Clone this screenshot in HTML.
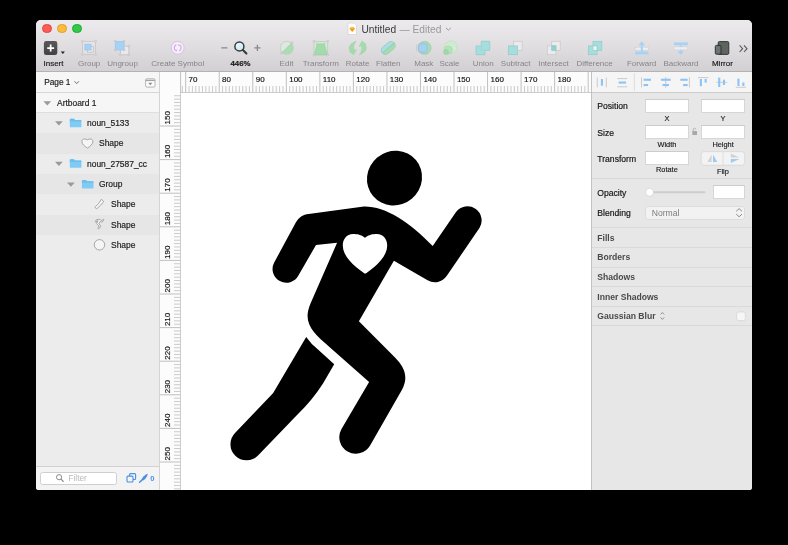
<!DOCTYPE html>
<html>
<head>
<meta charset="utf-8">
<title>Sketch</title>
<style>
*{box-sizing:border-box;margin:0;padding:0}
html,body{width:788px;height:545px;background:#000;overflow:hidden}
body{font-family:"Liberation Sans",sans-serif;position:relative;color:#222}
.abs{position:absolute}
#win{position:absolute;left:36px;top:20px;width:716px;height:469.6px;border-radius:5px 5px 3px 3px;overflow:hidden;background:#fff;will-change:transform}
#chrome{position:absolute;left:0;top:0;width:716px;height:52px;background:linear-gradient(#eceaec 0,#e4e2e4 18px,#d2d0d2 51px);border-bottom:1px solid #b4b2b4}
.tl{position:absolute;top:3.8px;width:9.6px;height:9.6px;border-radius:50%}
.lbl{position:absolute;top:38.5px;font-size:8px;line-height:10px;color:#878587;white-space:nowrap;transform:translateX(-50%)}
.lbl.on{color:#1c1c1c;-webkit-text-stroke:0.18px #1c1c1c}
#title{position:absolute;top:3.6px;left:0;height:12px;font-size:10.2px;line-height:12px;white-space:nowrap}
/* sidebar */
#side{position:absolute;left:0;top:52px;width:124px;height:418px;background:#ececec;border-right:1px solid #d4d4d4}
.row{position:absolute;left:0;width:123px;height:20.3px;font-size:8.45px;line-height:20.3px;color:#1e1e1e;white-space:nowrap;-webkit-text-stroke:0.18px #1e1e1e}
.row span{position:absolute;top:0}
/* inspector */
#insp{position:absolute;left:555.7px;top:52px;width:161px;height:418px;background:#e7e7e7;box-shadow:-1px 0 0 #c2c2c2}
.ilab{position:absolute;font-size:8.6px;line-height:10px;color:#151515;white-space:nowrap;-webkit-text-stroke:0.18px #151515}
.isub{position:absolute;font-size:7.4px;line-height:8px;color:#1a1a1a;white-space:nowrap;transform:translateX(-50%);-webkit-text-stroke:0.15px #1a1a1a}
.inp{position:absolute;background:#fff;border:0.8px solid #d6d6d6;border-top-color:#cccccc;height:13.7px}
.sep{position:absolute;left:0;width:161px;height:1px;background:#dadada}
.sect{position:absolute;left:5.6px;font-size:8.6px;line-height:10px;font-weight:bold;color:#4a4a4a;white-space:nowrap}
</style>
</head>
<body>
<div id="win">
  <!-- canvas -->
  <div class="abs" id="canvas" style="left:144.5px;top:72px;width:411px;height:397px;background:#fff"></div>
  <svg class="abs" style="left:144px;top:72px" width="412" height="397" viewBox="180 92 412 397">
    <g fill="#000">
      <ellipse cx="394.5" cy="178.1" rx="28" ry="26.9" transform="rotate(-40 394.5 178.1)"/>
      <path d="M363.9,206.4 C385,206 409.5,221.5 432.7,246 L456.2,211.8 A14.2,14.2 0 0 1 479.6,227.8 L446.6,276.1 A14.2,14.2 0 0 1 427.6,280.3 L393.9,260.7 L358.9,321.2 L395,357.6 C404.5,367.5 409,377 401.7,390.3 L370.1,445.4 A16.5,16.5 0 0 1 341.5,428.9 L369.1,382 L330,347.6 C313,332.5 302,323.5 310.5,303.5 L337.1,242.7 L316,245.1 L298.4,275.5 A13.7,13.7 0 0 1 274.2,262.5 L295.8,222.5 C299.5,216.5 303,214.6 308.6,213.9 Z"/>
      <path d="M306.2,337 Q311,344 318,349.6 L334.2,364.2 L323,383.5 Q312,400.5 298,414 L258,455.5 A16,16 0 0 1 235,433.1 L273.2,392.9 Z"/>
    </g>
    <path fill="#fff" d="M365,237.8 C361,234.5 357.5,234 353,234 C346.5,234 342.8,239.3 342.8,245.5 C342.8,256.3 353.5,265.5 364.2,273.2 Q365.2,273.9 366.2,273.2 C376.9,265.5 387.2,256.3 387.2,245.5 C387.2,239.3 383.5,234 376.8,234 C372.5,234 369,234.5 365,237.8 Z"/>
  </svg>

  <!-- title + toolbar -->
  <div id="chrome">
    <div class="tl" style="left:6.1px;background:#fc5b57;border:0.5px solid #e2463f"></div>
    <div class="tl" style="left:21.2px;background:#fdbc40;border:0.5px solid #dfa023"></div>
    <div class="tl" style="left:36.3px;background:#34c84a;border:0.5px solid #1dad2b"></div>
    <div id="title"><span class="abs" style="left:325.5px;color:#3a3a3a">Untitled</span><span class="abs" style="left:363.5px;color:#9a989a">— Edited</span></div>
    <div class="lbl on" style="left:17.5px">Insert</div>
    <div class="lbl" style="left:53.2px">Group</div>
    <div class="lbl" style="left:86.5px">Ungroup</div>
    <div class="lbl" style="left:141.8px">Create Symbol</div>
    <div class="lbl on" style="left:204.5px;font-weight:bold;font-size:7.8px">446%</div>
    <div class="lbl" style="left:250.5px">Edit</div>
    <div class="lbl" style="left:284.8px">Transform</div>
    <div class="lbl" style="left:321.6px">Rotate</div>
    <div class="lbl" style="left:352.3px">Flatten</div>
    <div class="lbl" style="left:387.8px">Mask</div>
    <div class="lbl" style="left:413.4px">Scale</div>
    <div class="lbl" style="left:447.2px">Union</div>
    <div class="lbl" style="left:479.7px">Subtract</div>
    <div class="lbl" style="left:517.5px">Intersect</div>
    <div class="lbl" style="left:558.6px">Difference</div>
    <div class="lbl" style="left:605.6px">Forward</div>
    <div class="lbl" style="left:645px">Backward</div>
    <div class="lbl on" style="left:686.4px">Mirror</div>
  </div>

  <!-- sidebar -->
  <div id="side">
    <div class="abs" style="left:0;top:0;width:123px;height:20.85px;background:#f6f6f6;border-bottom:1px solid #d6d6d6"></div>
    <div class="row" style="top:0;height:20px;line-height:20px"><span style="left:8.2px;font-size:8.3px">Page 1</span></div>
    <div class="row" style="top:20.85px;background:#f6f6f6;border-bottom:1px solid #dedede"><span style="left:21px">Artboard 1</span></div>
    <div class="row" style="top:41.15px;background:#ececec"><span style="left:51px">noun_5133</span></div>
    <div class="row" style="top:61.45px;background:#e6e6e6"><span style="left:63px">Shape</span></div>
    <div class="row" style="top:81.75px;background:#ececec"><span style="left:51px">noun_27587_cc</span></div>
    <div class="row" style="top:102.05px;background:#e6e6e6"><span style="left:63px">Group</span></div>
    <div class="row" style="top:122.35px;background:#ececec"><span style="left:75px">Shape</span></div>
    <div class="row" style="top:142.65px;background:#e6e6e6"><span style="left:75px">Shape</span></div>
    <div class="row" style="top:162.95px;background:#ececec"><span style="left:75px">Shape</span></div>
    <div class="abs" style="left:0;top:394.2px;width:123px;height:24px;background:#f3f3f3;border-top:1px solid #d2d2d2"></div>
    <div class="abs" style="left:4px;top:399.5px;width:76.5px;height:13.4px;background:#fff;border:0.7px solid #cfcfcf;border-radius:2.5px"></div>
    <div class="abs" style="left:32.4px;top:400.8px;font-size:8.3px;line-height:11px;color:#b8b8b8">Filter</div>
    <div class="abs" style="left:114.3px;top:401px;font-size:7.6px;line-height:11px;font-weight:bold;color:#4a90e2">0</div>
  </div>

  <!-- rulers -->
  <div class="abs" id="hruler" style="left:124px;top:52px;width:432px;height:20.6px;background:#fcfcfc;border-bottom:1px solid #cfcfcf"></div>
  <div class="abs" id="vruler" style="left:124px;top:72px;width:20.6px;height:398px;background:#fcfcfc;border-right:1px solid #cfcfcf"></div>

  <svg class="abs" style="left:124px;top:52px" width="432" height="21" viewBox="0 0 432 21"><path d="M20.6,0V20.6M25.70,0V20.6M59.24,0V20.6M92.78,0V20.6M126.32,0V20.6M159.86,0V20.6M193.40,0V20.6M226.94,0V20.6M260.48,0V20.6M294.02,0V20.6M327.56,0V20.6M361.10,0V20.6M394.64,0V20.6M428.18,0V20.6" stroke="#b9b9b9" stroke-width="0.9" fill="none"/><path d="M22.35,14V20.6M29.05,14V20.6M32.41,14V20.6M35.76,14V20.6M39.12,14V20.6M42.47,14V20.6M45.82,14V20.6M49.18,14V20.6M52.53,14V20.6M55.89,14V20.6M62.59,14V20.6M65.95,14V20.6M69.30,14V20.6M72.66,14V20.6M76.01,14V20.6M79.36,14V20.6M82.72,14V20.6M86.07,14V20.6M89.43,14V20.6M96.13,14V20.6M99.49,14V20.6M102.84,14V20.6M106.20,14V20.6M109.55,14V20.6M112.90,14V20.6M116.26,14V20.6M119.61,14V20.6M122.97,14V20.6M129.67,14V20.6M133.03,14V20.6M136.38,14V20.6M139.74,14V20.6M143.09,14V20.6M146.44,14V20.6M149.80,14V20.6M153.15,14V20.6M156.51,14V20.6M163.21,14V20.6M166.57,14V20.6M169.92,14V20.6M173.28,14V20.6M176.63,14V20.6M179.98,14V20.6M183.34,14V20.6M186.69,14V20.6M190.05,14V20.6M196.75,14V20.6M200.11,14V20.6M203.46,14V20.6M206.82,14V20.6M210.17,14V20.6M213.52,14V20.6M216.88,14V20.6M220.23,14V20.6M223.59,14V20.6M230.29,14V20.6M233.65,14V20.6M237.00,14V20.6M240.36,14V20.6M243.71,14V20.6M247.06,14V20.6M250.42,14V20.6M253.77,14V20.6M257.13,14V20.6M263.83,14V20.6M267.19,14V20.6M270.54,14V20.6M273.90,14V20.6M277.25,14V20.6M280.60,14V20.6M283.96,14V20.6M287.31,14V20.6M290.67,14V20.6M297.37,14V20.6M300.73,14V20.6M304.08,14V20.6M307.44,14V20.6M310.79,14V20.6M314.14,14V20.6M317.50,14V20.6M320.85,14V20.6M324.21,14V20.6M330.91,14V20.6M334.27,14V20.6M337.62,14V20.6M340.98,14V20.6M344.33,14V20.6M347.68,14V20.6M351.04,14V20.6M354.39,14V20.6M357.75,14V20.6M364.45,14V20.6M367.81,14V20.6M371.16,14V20.6M374.52,14V20.6M377.87,14V20.6M381.22,14V20.6M384.58,14V20.6M387.93,14V20.6M391.29,14V20.6M397.99,14V20.6M401.35,14V20.6M404.70,14V20.6M408.06,14V20.6M411.41,14V20.6M414.76,14V20.6M418.12,14V20.6M421.47,14V20.6M424.83,14V20.6" stroke="#bebebe" stroke-width="0.8" fill="none"/><g font-family="Liberation Sans, sans-serif" font-size="8" fill="#111" stroke="#111" stroke-width=".15"><text x="28.6" y="10.3">70</text><text x="62.1" y="10.3">80</text><text x="95.7" y="10.3">90</text><text x="129.2" y="10.3">100</text><text x="162.8" y="10.3">110</text><text x="196.3" y="10.3">120</text><text x="229.8" y="10.3">130</text><text x="263.4" y="10.3">140</text><text x="296.9" y="10.3">150</text><text x="330.5" y="10.3">160</text><text x="364.0" y="10.3">170</text><text x="397.5" y="10.3">180</text><text x="431.1" y="10.3">190</text></g></svg>
  <svg class="abs" style="left:124px;top:72px" width="21" height="398" viewBox="0 0 21 398"><path d="M0,34.00H20.5M0,67.60H20.5M0,101.20H20.5M0,134.80H20.5M0,168.40H20.5M0,202.00H20.5M0,235.60H20.5M0,269.20H20.5M0,302.80H20.5M0,336.40H20.5M0,370.00H20.5" stroke="#b9b9b9" stroke-width="0.9" fill="none"/><path d="M14,3.76H20.5M14,7.12H20.5M14,10.48H20.5M14,13.84H20.5M14,17.20H20.5M14,20.56H20.5M14,23.92H20.5M14,27.28H20.5M14,30.64H20.5M14,37.36H20.5M14,40.72H20.5M14,44.08H20.5M14,47.44H20.5M14,50.80H20.5M14,54.16H20.5M14,57.52H20.5M14,60.88H20.5M14,64.24H20.5M14,70.96H20.5M14,74.32H20.5M14,77.68H20.5M14,81.04H20.5M14,84.40H20.5M14,87.76H20.5M14,91.12H20.5M14,94.48H20.5M14,97.84H20.5M14,104.56H20.5M14,107.92H20.5M14,111.28H20.5M14,114.64H20.5M14,118.00H20.5M14,121.36H20.5M14,124.72H20.5M14,128.08H20.5M14,131.44H20.5M14,138.16H20.5M14,141.52H20.5M14,144.88H20.5M14,148.24H20.5M14,151.60H20.5M14,154.96H20.5M14,158.32H20.5M14,161.68H20.5M14,165.04H20.5M14,171.76H20.5M14,175.12H20.5M14,178.48H20.5M14,181.84H20.5M14,185.20H20.5M14,188.56H20.5M14,191.92H20.5M14,195.28H20.5M14,198.64H20.5M14,205.36H20.5M14,208.72H20.5M14,212.08H20.5M14,215.44H20.5M14,218.80H20.5M14,222.16H20.5M14,225.52H20.5M14,228.88H20.5M14,232.24H20.5M14,238.96H20.5M14,242.32H20.5M14,245.68H20.5M14,249.04H20.5M14,252.40H20.5M14,255.76H20.5M14,259.12H20.5M14,262.48H20.5M14,265.84H20.5M14,272.56H20.5M14,275.92H20.5M14,279.28H20.5M14,282.64H20.5M14,286.00H20.5M14,289.36H20.5M14,292.72H20.5M14,296.08H20.5M14,299.44H20.5M14,306.16H20.5M14,309.52H20.5M14,312.88H20.5M14,316.24H20.5M14,319.60H20.5M14,322.96H20.5M14,326.32H20.5M14,329.68H20.5M14,333.04H20.5M14,339.76H20.5M14,343.12H20.5M14,346.48H20.5M14,349.84H20.5M14,353.20H20.5M14,356.56H20.5M14,359.92H20.5M14,363.28H20.5M14,366.64H20.5M14,373.36H20.5M14,376.72H20.5M14,380.08H20.5M14,383.44H20.5M14,386.80H20.5M14,390.16H20.5M14,393.52H20.5M14,396.88H20.5" stroke="#bebebe" stroke-width="0.8" fill="none"/><g font-family="Liberation Sans, sans-serif" font-size="8" fill="#111" stroke="#111" stroke-width=".15"><text transform="translate(9.7,32.5) rotate(-90)">150</text><text transform="translate(9.7,66.1) rotate(-90)">160</text><text transform="translate(9.7,99.7) rotate(-90)">170</text><text transform="translate(9.7,133.3) rotate(-90)">180</text><text transform="translate(9.7,166.9) rotate(-90)">190</text><text transform="translate(9.7,200.5) rotate(-90)">200</text><text transform="translate(9.7,234.1) rotate(-90)">210</text><text transform="translate(9.7,267.7) rotate(-90)">220</text><text transform="translate(9.7,301.3) rotate(-90)">230</text><text transform="translate(9.7,334.9) rotate(-90)">240</text><text transform="translate(9.7,368.5) rotate(-90)">250</text></g></svg>
  <!-- inspector -->
  <div id="insp">
    <div class="abs" style="left:0;top:0;width:161px;height:20.6px;background:#f5f5f5;border-bottom:1px solid #cdcdcd"></div>
    <div class="ilab" style="left:5.6px;top:29px">Position</div>
    <div class="ilab" style="left:5.6px;top:55.5px">Size</div>
    <div class="ilab" style="left:5.6px;top:82px">Transform</div>
    <div class="inp" style="left:53.5px;top:27px;width:43.5px"></div>
    <div class="inp" style="left:109.5px;top:27px;width:43.6px"></div>
    <div class="inp" style="left:53.5px;top:53.4px;width:43.5px"></div>
    <div class="inp" style="left:109.5px;top:53.4px;width:43.6px"></div>
    <div class="inp" style="left:53.5px;top:79.3px;width:43.5px"></div>
    <div class="isub" style="left:75.2px;top:42.8px">X</div>
    <div class="isub" style="left:131.4px;top:42.8px">Y</div>
    <div class="isub" style="left:75.2px;top:69.1px">Width</div>
    <div class="isub" style="left:131.4px;top:69.1px">Height</div>
    <div class="isub" style="left:75.2px;top:94.4px">Rotate</div>
    <div class="isub" style="left:131.2px;top:95.9px">Flip</div>
    <div class="sep" style="top:106.4px"></div>
    <div class="ilab" style="left:5.6px;top:115.5px">Opacity</div>
    <div class="ilab" style="left:5.6px;top:135.8px">Blending</div>
    <div class="inp" style="left:121.6px;top:113.2px;width:31.7px;height:13.5px"></div>
    <div class="abs" style="left:53.8px;top:133.5px;width:99.5px;height:14.5px;background:#f2f2f2;border:0.8px solid #dcdcdc;border-radius:3px"></div>
    <div class="abs" style="left:60px;top:135.8px;font-size:8.6px;line-height:10px;color:#7c7c7c">Normal</div>
    <div class="sep" style="top:155px"></div>
    <div class="sect" style="top:160.8px">Fills</div>
    <div class="sep" style="top:174.8px"></div>
    <div class="sect" style="top:180.3px">Borders</div>
    <div class="sep" style="top:194.5px"></div>
    <div class="sect" style="top:199.9px">Shadows</div>
    <div class="sep" style="top:214.1px"></div>
    <div class="sect" style="top:219.5px">Inner Shadows</div>
    <div class="sep" style="top:233.6px"></div>
    <div class="sect" style="top:238.9px">Gaussian Blur</div>
    <div class="sep" style="top:253px"></div>
  </div>
</div>
<svg class="abs" id="icons" style="left:0;top:0" width="788" height="545" viewBox="0 0 788 545">
<defs><linearGradient id="gi" x1="0" y1="0" x2="0" y2="1"><stop offset="0" stop-color="#585858"/><stop offset="1" stop-color="#434343"/></linearGradient>
<linearGradient id="gm" x1="0" y1="0" x2="1" y2="1"><stop offset="0" stop-color="#f4fbff"/><stop offset="1" stop-color="#c4e4f6"/></linearGradient></defs>
<!-- title -->
<path d="M348,23.1 h6.3 l2.1,2.1 v9.3 h-8.4 Z" fill="#fff" stroke="#c4c2c4" stroke-width=".5"/>
<path d="M349.5,28.7 l1.5,-1.7 h2.5 l1.5,1.7 l-2.75,3.2 Z" fill="#f39c12"/><path d="M349.5,28.7 l1.5,-1.7 h2.5 l1.5,1.7 Z" fill="#fdc02f"/>
<path d="M446,27.9 l2.4,2.3 l2.4,-2.3" fill="none" stroke="#9a989a" stroke-width="1"/>
<!-- insert -->
<rect x="43.9" y="41.1" width="13.4" height="13.9" rx="2.3" fill="url(#gi)"/>
<path d="M47.2,48.1 h6.9 M50.65,44.6 v7" stroke="#fff" stroke-width="1.75"/>
<path d="M60.8,51.5 h4.1 l-2.05,2.6 Z" fill="#222"/>
<!-- group -->
<rect x="82.4" y="41.3" width="13.2" height="13.2" fill="rgba(255,255,255,.18)" stroke="#c2c0c2" stroke-width=".7"/>
<circle cx="82.4" cy="41.3" r="0.95" fill="#e4e2e4" stroke="#b4b2b4" stroke-width=".5"/><circle cx="95.60000000000001" cy="41.3" r="0.95" fill="#e4e2e4" stroke="#b4b2b4" stroke-width=".5"/><circle cx="82.4" cy="54.5" r="0.95" fill="#e4e2e4" stroke="#b4b2b4" stroke-width=".5"/><circle cx="95.60000000000001" cy="54.5" r="0.95" fill="#e4e2e4" stroke="#b4b2b4" stroke-width=".5"/>
<rect x="87.4" y="46.4" width="6.2" height="5.8" fill="#e6e4e6" stroke="#bcbabc" stroke-width=".6"/>
<rect x="84.9" y="44.1" width="6.1" height="5.9" fill="#a6d2f7" stroke="#8fc2ec" stroke-width=".6"/>
<!-- ungroup -->
<rect x="120.3" y="46.2" width="8.6" height="8.6" fill="#ebe9eb" stroke="#bcbabc" stroke-width=".7"/>
<circle cx="120.3" cy="46.2" r="0.95" fill="#e4e2e4" stroke="#b4b2b4" stroke-width=".5"/><circle cx="128.9" cy="46.2" r="0.95" fill="#e4e2e4" stroke="#b4b2b4" stroke-width=".5"/><circle cx="120.3" cy="54.800000000000004" r="0.95" fill="#e4e2e4" stroke="#b4b2b4" stroke-width=".5"/><circle cx="128.9" cy="54.800000000000004" r="0.95" fill="#e4e2e4" stroke="#b4b2b4" stroke-width=".5"/>
<rect x="115.2" y="41.3" width="8.9" height="8.7" fill="#a6d2f7" stroke="#8fc2ec" stroke-width=".6"/>
<circle cx="115.2" cy="41.3" r="0.95" fill="#e4e2e4" stroke="#b4b2b4" stroke-width=".5"/><circle cx="124.10000000000001" cy="41.3" r="0.95" fill="#e4e2e4" stroke="#b4b2b4" stroke-width=".5"/><circle cx="115.2" cy="50.0" r="0.95" fill="#e4e2e4" stroke="#b4b2b4" stroke-width=".5"/><circle cx="124.10000000000001" cy="50.0" r="0.95" fill="#e4e2e4" stroke="#b4b2b4" stroke-width=".5"/>
<!-- create symbol -->
<circle cx="177.7" cy="47.8" r="6.4" fill="#f4f0f6" stroke="#d4b6e2" stroke-width=".8"/>
<path d="M176.3,44.6 A3.5,3.5 0 0 0 176,50.8 M179.1,51 A3.5,3.5 0 0 0 179.4,44.8" fill="none" stroke="#dcaaec" stroke-width="1.3"/>
<path d="M175.2,50.2 l2.1,-.6 l-.5,2.2 Z M180.2,45.4 l-2.1,.6 l.5,-2.2 Z" fill="#dcaaec"/>
<!-- zoom -->
<path d="M221.3,47.9 h6.1 M254.3,47.9 h6.2 M257.4,44.8 v6.2" stroke="#8a888a" stroke-width="1.3"/>
<circle cx="239.4" cy="46.4" r="4.5" fill="url(#gm)" stroke="#3a3a3a" stroke-width="1.5"/>
<path d="M242.9,50 L246.4,53.6" stroke="#3a3a3a" stroke-width="2.1" stroke-linecap="round"/>
<!-- edit -->
<circle cx="286.8" cy="47.9" r="6.5" fill="#dde9de"/>
<path d="M282.2,52.5 A6.5,6.5 0 0 0 291.4,43.3 Z" fill="#a9ddb2"/>
<circle cx="286.8" cy="47.9" r="6.5" fill="none" stroke="#b4ccb8" stroke-width=".7"/>
<path d="M281.2,53.4 L292.4,42.4" stroke="#b6beb8" stroke-width=".8"/>
<circle cx="281.4" cy="53.2" r=".9" fill="#e4e2e4" stroke="#b4b2b4" stroke-width=".5"/><circle cx="292.2" cy="42.6" r=".9" fill="#e4e2e4" stroke="#b4b2b4" stroke-width=".5"/>
<!-- transform -->
<rect x="314" y="41.4" width="13.7" height="13.6" fill="#d3ead5" stroke="#bccabe" stroke-width=".7"/>
<path d="M317.3,43.9 h6.9 l3.2,10.8 h-13.1 Z" fill="#a3dbad" stroke="#93cc9d" stroke-width=".6"/>
<circle cx="314" cy="41.4" r="0.95" fill="#e4e2e4" stroke="#b4b2b4" stroke-width=".5"/><circle cx="327.7" cy="41.4" r="0.95" fill="#e4e2e4" stroke="#b4b2b4" stroke-width=".5"/><circle cx="314" cy="55.0" r="0.95" fill="#e4e2e4" stroke="#b4b2b4" stroke-width=".5"/><circle cx="327.7" cy="55.0" r="0.95" fill="#e4e2e4" stroke="#b4b2b4" stroke-width=".5"/>
<circle cx="317.3" cy="43.9" r=".8" fill="#e4e2e4" stroke="#b4b2b4" stroke-width=".5"/><circle cx="324.2" cy="43.9" r=".8" fill="#e4e2e4" stroke="#b4b2b4" stroke-width=".5"/>
<!-- rotate -->
<g fill="#a3dbad" stroke="#93cf9e" stroke-width=".35">
<path id="rotl" d="M356.1,41.2 C352,42.6 349.2,45 349.2,48 C349.2,49.4 349.5,50.5 350,51.3 L349.3,51.6 L353.6,54.8 L356.4,49.4 L354.3,50.1 C353.5,48.4 353.2,45 356.1,41.2 Z"/>
<path transform="rotate(180 357.75 47.95)" d="M356.1,41.2 C352,42.6 349.2,45 349.2,48 C349.2,49.4 349.5,50.5 350,51.3 L349.3,51.6 L353.6,54.8 L356.4,49.4 L354.3,50.1 C353.5,48.4 353.2,45 356.1,41.2 Z"/>
</g>
<!-- flatten -->
<g transform="rotate(-40 388.3 47.95)">
<rect x="380.45" y="43.75" width="15.7" height="8.4" rx="4.2" fill="#a5dcae"/>
<path d="M380.45,47.95 a4.2,4.2 0 0 1 4.2,-4.2 h7.3 a4.2,4.2 0 0 1 4.2,4.2 Z" fill="#a9dde8"/>
<rect x="380.45" y="43.75" width="15.7" height="8.4" rx="4.2" fill="none" stroke="#93c9b0" stroke-width=".6"/>
<path d="M380.45,47.95 h15.7" stroke="#8cc0a4" stroke-width=".6"/>
</g>
<!-- mask -->
<path d="M416.6,44.2 v7.6" stroke="#c6c4c6" stroke-width=".6"/>
<circle cx="424.5" cy="47.9" r="6.5" fill="#a9ddb2" stroke="#90cc9a" stroke-width=".7"/>
<rect x="418.7" y="43.8" width="8.4" height="8.4" rx="1.3" fill="#a8cff2" stroke="#8cbbe2" stroke-width=".7"/>
<!-- scale -->
<circle cx="450.9" cy="47.2" r="6.3" fill="#cfebd2" stroke="#b6dfba" stroke-width=".6"/>
<circle cx="448.2" cy="50" r="4" fill="#b7e2bc" stroke="#9fd4a6" stroke-width=".6"/>
<circle cx="446" cy="52.1" r="2.4" fill="#a1d9aa" stroke="#8ccb96" stroke-width=".6"/>
<!-- union -->
<path d="M481.2,41.3 h8.6 v9 h-4.8 v4.4 h-9 v-8.8 h5.2 Z" fill="#a6dddd" stroke="#8ecbcb" stroke-width=".7"/>
<path d="M481.2,45.9 v4.4 h3.8" fill="none" stroke="#97d2d2" stroke-width=".5"/>
<!-- subtract -->
<rect x="513.6" y="41.3" width="8.5" height="9" fill="#ecebec" stroke="#c8c6c8" stroke-width=".7"/>
<rect x="508.4" y="45.9" width="9" height="8.8" fill="#a6dddd" stroke="#8ecbcb" stroke-width=".7"/>
<!-- intersect -->
<rect x="551.7" y="41.3" width="8.5" height="9" fill="#ecebec" stroke="#c8c6c8" stroke-width=".7"/>
<rect x="547.3" y="45.9" width="8.6" height="8.8" fill="#ecebec" stroke="#c8c6c8" stroke-width=".7"/>
<rect x="551.7" y="45.9" width="4.2" height="4.4" fill="#8fd3d6" stroke="#7cc4c8" stroke-width=".6"/>
<!-- difference -->
<rect x="593" y="41.3" width="8.8" height="9" fill="#a6dddd" stroke="#8ecbcb" stroke-width=".7"/>
<rect x="588.4" y="45.9" width="8.6" height="8.8" fill="#a6dddd" stroke="#8ecbcb" stroke-width=".7"/>
<rect x="593" y="45.9" width="4" height="4.4" fill="#f1f0f1" stroke="#8ecbcb" stroke-width=".6"/>
<!-- forward -->
<rect x="635.1" y="51.6" width="13.4" height="2.8" fill="#a6d2f7"/>
<rect x="635.1" y="47.2" width="13.4" height="3" fill="#efeeef" stroke="#cfcdcf" stroke-width=".6"/>
<path d="M640.8,51.6 v-6.4 h-2.3 l3.3,-3.9 l3.3,3.9 h-2.3 v6.4 Z" fill="#a6d2f7"/>
<!-- backward -->
<rect x="673.9" y="42.4" width="13.9" height="2.8" fill="#a6d2f7"/>
<path d="M679.8,45.2 v6 h-2.3 l3.3,3.8 l3.3,-3.8 h-2.3 v-6 Z" fill="#a6d2f7"/>
<rect x="673.9" y="46.9" width="13.9" height="3" fill="#efeeef" stroke="#cfcdcf" stroke-width=".6"/>
<!-- mirror -->
<rect x="718.2" y="41.6" width="10.6" height="12.8" rx="1.3" fill="#5d6561" stroke="#2c2e2d" stroke-width=".9"/>
<rect x="715.3" y="45.4" width="5.7" height="8.8" rx="1" fill="#6d7571" stroke="#262827" stroke-width=".9"/>
<path d="M739.6,45.4 l3,3.3 l-3,3.3 M744,45.4 l3,3.3 l-3,3.3" fill="none" stroke="#585658" stroke-width="1.1"/>

<!-- sidebar -->
<path d="M74.5,81.3 l2.2,2.3 l2.2,-2.3" fill="none" stroke="#6e6e6e" stroke-width="1"/>
<rect x="145.6" y="78.8" width="9.4" height="8.3" rx="1.2" fill="#fafafa" stroke="#a4a4a4" stroke-width=".8"/>
<path d="M145.6,80.4 h9.4" stroke="#a4a4a4" stroke-width="1.3"/>
<path d="M148.3,82.8 h4 l-2,2.4 Z" fill="#8a8a8a"/>
<path d="M43.4,101.3 h7.8 l-3.9,4.3 Z" fill="#9a9a9a"/><path d="M55,121.2 h7.8 l-3.9,4.3 Z" fill="#9a9a9a"/><path d="M55,161.7 h7.8 l-3.9,4.3 Z" fill="#9a9a9a"/><path d="M67,182.4 h7.8 l-3.9,4.3 Z" fill="#9a9a9a"/>
<path d="M69.8,119.60000000000001 q0,-0.9 .9,-.9 h3.2 l1.1,1.3 h5.5 q.9,0 .9,.9 v5.5 q0,.9 -.9,.9 h-9.8 q-.9,0 -.9,-.9 Z" fill="#7ecbf6"/><path d="M69.8,119.60000000000001 q0,-0.9 .9,-.9 h3.2 l1.1,1.3 h5.5 q.9,0 .9,.9 v.5 h-11.6 Z" fill="#6dbdee"/><path d="M69.8,160.1 q0,-0.9 .9,-.9 h3.2 l1.1,1.3 h5.5 q.9,0 .9,.9 v5.5 q0,.9 -.9,.9 h-9.8 q-.9,0 -.9,-.9 Z" fill="#7ecbf6"/><path d="M69.8,160.1 q0,-0.9 .9,-.9 h3.2 l1.1,1.3 h5.5 q.9,0 .9,.9 v.5 h-11.6 Z" fill="#6dbdee"/><path d="M81.9,180.9 q0,-0.9 .9,-.9 h3.2 l1.1,1.3 h5.5 q.9,0 .9,.9 v5.5 q0,.9 -.9,.9 h-9.8 q-.9,0 -.9,-.9 Z" fill="#7ecbf6"/><path d="M81.9,180.9 q0,-0.9 .9,-.9 h3.2 l1.1,1.3 h5.5 q.9,0 .9,.9 v.5 h-11.6 Z" fill="#6dbdee"/>
<g fill="#f5f5f5" stroke="#939393">
<path transform="translate(81.9,139) scale(0.2477,0.2273) translate(-342.8,-234)" vector-effect="non-scaling-stroke" stroke-width=".8" d="M365,237.8 C361,234.5 357.5,234 353,234 C346.5,234 342.8,239.3 342.8,245.5 C342.8,256.3 353.5,265.5 364.2,273.2 Q365.2,273.9 366.2,273.2 C376.9,265.5 387.2,256.3 387.2,245.5 C387.2,239.3 383.5,234 376.8,234 C372.5,234 369,234.5 365,237.8 Z"/>
<path transform="translate(95.2,199.3) scale(0.0815,0.0748) translate(-230.5,-337)" vector-effect="non-scaling-stroke" stroke-width=".8" d="M306.2,337 Q311,344 318,349.6 L334.2,364.2 L323,383.5 Q312,400.5 298,414 L258,455.5 A16,16 0 0 1 235,433.1 L273.2,392.9 Z"/>
<path transform="translate(95.2,219.2) scale(0.0405,0.0384) translate(-270.5,-203)" vector-effect="non-scaling-stroke" stroke-width=".8" d="M363.9,206.4 C385,206 409.5,221.5 432.7,246 L456.2,211.8 A14.2,14.2 0 0 1 479.6,227.8 L446.6,276.1 A14.2,14.2 0 0 1 427.6,280.3 L393.9,260.7 L358.9,321.2 L395,357.6 C404.5,367.5 409,377 401.7,390.3 L370.1,445.4 A16.5,16.5 0 0 1 341.5,428.9 L369.1,382 L330,347.6 C313,332.5 302,323.5 310.5,303.5 L337.1,242.7 L316,245.1 L298.4,275.5 A13.7,13.7 0 0 1 274.2,262.5 L295.8,222.5 C299.5,216.5 303,214.6 308.6,213.9 Z"/>
<circle cx="99.5" cy="244.8" r="5.2" stroke-width=".8"/>
</g>
<!-- bottom bar -->
<circle cx="59.1" cy="477.2" r="2.6" fill="none" stroke="#8a8a8a" stroke-width="1"/>
<path d="M61,479.2 L63.3,481.5" stroke="#8a8a8a" stroke-width="1.1" stroke-linecap="round"/>
<rect x="129.6" y="473.6" width="6" height="5.9" rx="1" fill="none" stroke="#4a90e2" stroke-width="1.1"/>
<rect x="127" y="476.1" width="6" height="5.9" rx="1" fill="#f4f4f4" stroke="#4a90e2" stroke-width="1.1"/>
<path d="M147.8,473.5 C144.6,475 142.3,477.4 141.4,479.7 L143.2,480.6 C145.6,479 147.4,476.5 147.8,473.5 Z" fill="#4a90e2"/>
<path d="M141.9,480.1 L139.6,482.3" stroke="#4a90e2" stroke-width="1.5" stroke-linecap="round"/>

<!-- inspector align icons -->
<g stroke="#b9b9b9" stroke-width=".7">
<path d="M597.3,77.6 v9.7 M606.3,77.6 v9.7 M617.1,78.6 h10.2 M617.1,86.8 h10.2 M641.5,77.4 v10 M665.7,77 v10.8 M689.4,77.4 v10 M698,77.6 h10.4 M716.4,82.3 h10.8 M735.8,87.3 h10.1"/>
<path d="M634.4,73 v18" stroke="#d4d4d4"/>
</g>
<g fill="#8cc4f5">
<rect x="600.9" y="79" width="2.1" height="6.7"/>
<rect x="618.6" y="81.5" width="7.4" height="2.1"/>
<rect x="643.6" y="78.7" width="7.4" height="2.1"/><rect x="643.6" y="84" width="4.5" height="2.1"/>
<rect x="660.9" y="78.7" width="9.7" height="2.1"/><rect x="662.5" y="84" width="6.4" height="2.1"/>
<rect x="680.3" y="78.7" width="7.4" height="2.1"/><rect x="683.1" y="84" width="4.6" height="2.1"/>
<rect x="699.8" y="79" width="2.1" height="7.2"/><rect x="704.6" y="79" width="2.1" height="3.6"/>
<rect x="718.2" y="77.6" width="2.1" height="9.4"/><rect x="722.9" y="79.7" width="2.1" height="5.3"/>
<rect x="737.4" y="78.6" width="2.1" height="7.4"/><rect x="742.3" y="82.5" width="2.1" height="3.5"/>
</g>
<!-- lock -->
<rect x="692.3" y="131" width="4.7" height="3.9" rx=".5" fill="#a8a8a8"/>
<path d="M693.2,131 v-1.4 a1.3,1.3 0 0 1 2.6,0" fill="none" stroke="#a8a8a8" stroke-width=".8"/>
<!-- flip -->
<rect x="701.2" y="151.6" width="43.5" height="13.7" rx="3" fill="#f3f3f3" stroke="#d2d2d2" stroke-width=".7"/>
<path d="M723.1,152 v13" stroke="#d6d6d6" stroke-width=".7"/>
<path d="M711.6,154.4 v7.7 h-4.2 Z" fill="#d2d2d2"/><path d="M713,154.4 v7.7 h4.3 Z" fill="#9ccbf6"/>
<path d="M730.8,157.6 h8.6 l-8.6,-4 Z" fill="#d2d2d2"/><path d="M730.8,158.9 h8.6 l-8.6,4 Z" fill="#9ccbf6"/>
<!-- slider -->
<path d="M650,192.2 H704.6" stroke="#cdcdcd" stroke-width="1.9" stroke-linecap="round"/>
<circle cx="649.6" cy="192.3" r="4" fill="#fff" stroke="#cfcfcf" stroke-width=".7"/>
<!-- select chevrons -->
<path d="M736.2,211.3 l2.9,-2.7 l2.9,2.7 M736.2,214.1 l2.9,2.7 l2.9,-2.7" fill="none" stroke="#868686" stroke-width=".95"/>
<path d="M660.6,314.4 l1.8,-1.9 l1.8,1.9 M660.6,317.4 l1.8,1.9 l1.8,-1.9" fill="none" stroke="#7a7a7a" stroke-width=".8"/>
<rect x="736.6" y="312" width="8.8" height="8.6" rx="2" fill="#f6f6f6" stroke="#d2d2d2" stroke-width=".7"/>
</svg>
</body>
</html>
